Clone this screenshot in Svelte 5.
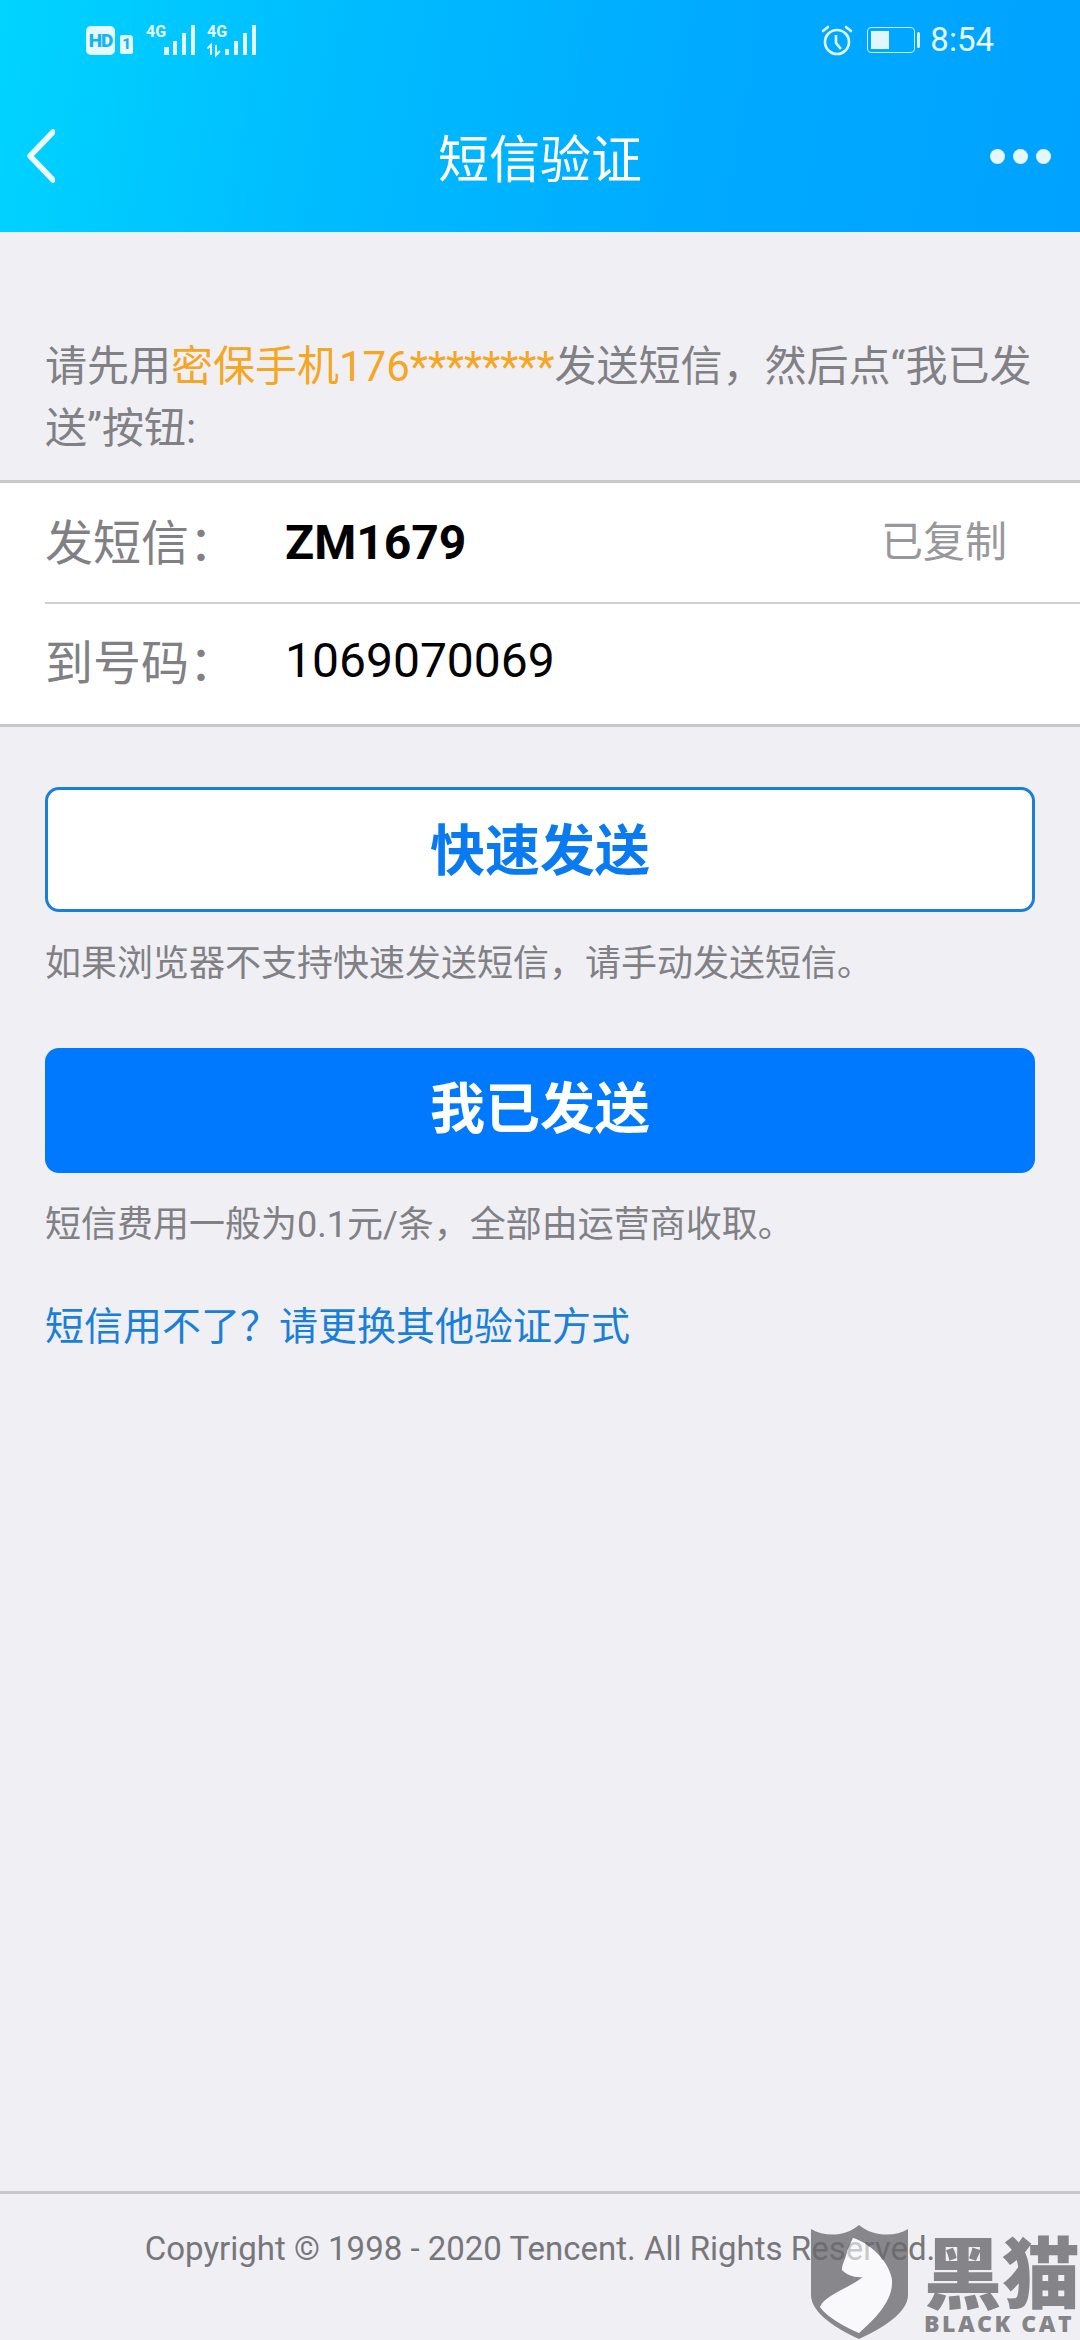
<script>
  const rows = [
    { label: '发短信：', value: 'ZM1679', strong: true, action: '已复制' },
    { label: '到号码：', value: '1069070069' }
  ]
</script>

<div class="page">
  <header class="top">
    <div class="status">
      <div class="status-left">
        <span class="hd">HD</span>
        <span class="sim">1</span>
        <svg class="signal" width="50" height="32" viewBox="0 0 50 32">
          <text x="0" y="13" class="net">4G</text>
          <g fill="#e6f9ff">
            <rect x="18" y="23" width="5" height="8" />
            <rect x="27" y="17" width="4" height="14" />
            <rect x="36" y="9" width="4" height="22" />
            <rect x="45" y="1" width="4" height="30" />
          </g>
        </svg>
        <svg class="signal second" width="50" height="32" viewBox="0 0 50 32">
          <text x="0" y="13" class="net">4G</text>
          <g fill="#e6f9ff">
            <path d="M4 31v-10l-3.500 3.500M9 21v10l4-4" fill="none" stroke="#e6f9ff" stroke-width="2" />
            <rect x="18" y="25" width="4" height="6" />
            <rect x="27" y="17" width="4" height="14" />
            <rect x="36" y="9" width="4" height="22" />
            <rect x="45" y="1" width="4" height="30" />
          </g>
        </svg>
      </div>
      <div class="status-right">
        <svg class="alarm" width="32" height="32" viewBox="0 0 32 32" fill="none" stroke="#e6f9ff" stroke-width="2.6">
          <circle cx="16" cy="18" r="12" />
          <path d="M15 11v8l5 6" />
          <path d="M2 7l5-4M30 7l-5-4" stroke-linecap="round" />
        </svg>
        <div class="battery"><span class="level"></span></div>
        <span class="tip"></span>
        <span class="time">8:54</span>
      </div>
    </div>
    <div class="nav">
      <svg class="back" width="28" height="54" viewBox="0 0 28 54" fill="none" stroke="#eefbff" stroke-width="5.5" stroke-linecap="round" stroke-linejoin="round">
        <path d="M26 3L3 27l23 24" />
      </svg>
      <h1>短信验证</h1>
      <div class="dots"><i></i><i></i><i></i></div>
    </div>
  </header>

  <main>
    <p class="intro">请先用<em>密保手机176********</em>发送短信，然后点“我已发送”按钮:</p>

    <section class="card">
      {#each rows as row}
        <div class="row">
          <span class="label">{row.label}</span>
          <span class="value" class:strong={row.strong}>{row.value}</span>
          {#if row.action}<span class="action">{row.action}</span>{/if}
        </div>
      {/each}
    </section>

    <div class="actions">
      <button class="btn outline">快速发送</button>
      <p class="hint">如果浏览器不支持快速发送短信，请手动发送短信。</p>
      <button class="btn solid">我已发送</button>
      <p class="hint">短信费用一般为0.1元/条，全部由运营商收取。</p>
      <p class="link">短信用不了？请更换其他验证方式</p>
    </div>
  </main>

  <footer>Copyright © 1998 - 2020 Tencent. All Rights Reserved.</footer>

  <div class="watermark">
    <svg width="98" height="115" viewBox="0 0 98 115">
      <path fill-rule="evenodd" fill="#6a6a6e" fill-opacity="0.78" d="M0 4C14 12 34 12 48 0C62 12 84 12 97 4V70C97 88 70 104 48 114C26 104 0 88 0 70ZM42 13C58 18 78 35 81 55C82 75 66 92 48 108C34 102 16 92 9 82C14 70 35 65 52 52C44 53 36 50 31 45C31 38 36 32 36 26Z" />
      <path fill="#fff" fill-opacity="0.6" d="M42 13C58 18 78 35 81 55C82 75 66 92 48 108C34 102 16 92 9 82C14 70 35 65 52 52C44 53 36 50 31 45C31 38 36 32 36 26Z" />
    </svg>
    <div class="brand">
      <span class="cn">黑猫</span>
      <span class="en">BLACK CAT</span>
    </div>
  </div>
</div>

<style>
  :global(body) {
    margin: 0;
  }

  .page {
    position: relative;
    width: 1080px;
    height: 2340px;
    overflow: hidden;
    display: flex;
    flex-direction: column;
    background: #efeff4;
    font-family: Roboto, "Noto Sans CJK SC", sans-serif;
  }

  .top {
    height: 232px;
    background: linear-gradient(100deg, #00d4ff 0%, #00bdff 30%, #00aaff 65%, #00a2ff 100%);
  }

  .status {
    height: 80px;
    display: flex;
    justify-content: space-between;
    align-items: center;
    padding: 0 86px 0 86px;
    color: #e6f9ff;
  }

  .status-left,
  .status-right {
    display: flex;
    align-items: center;
  }

  .hd {
    width: 29px;
    height: 29px;
    border-radius: 5px;
    background: #e6f9ff;
    color: #12b5f0;
    font-size: 19px;
    font-weight: 900;
    line-height: 29px;
    text-align: center;
    letter-spacing: -1px;
  }

  .sim {
    width: 13px;
    height: 19px;
    margin: 9px 0 0 5px;
    border-radius: 2px 4px 2px 2px;
    background: #e6f9ff;
    color: #12b5f0;
    font-size: 15px;
    font-weight: 900;
    line-height: 19px;
    text-align: center;
  }

  .signal {
    margin-left: 13px;
    overflow: visible;
  }

  .signal.second {
    margin-left: 11px;
  }

  .net {
    font-family: Roboto, sans-serif;
    font-size: 16px;
    font-weight: 700;
    fill: #e6f9ff;
  }

  .battery {
    width: 48px;
    height: 26px;
    margin-left: 14px;
    box-sizing: border-box;
    padding: 3px;
    border: 1.5px solid #c4efff;
    border-radius: 4px;
  }

  .level {
    display: block;
    width: 18px;
    height: 100%;
    background: #e2f6ff;
  }

  .tip {
    width: 3px;
    height: 16px;
    margin-left: 2px;
    border-radius: 2px;
    background: #d5f3ff;
  }

  .time {
    margin-left: 10px;
    font-size: 33px;
    line-height: 40px;
  }

  .nav {
    position: relative;
    height: 152px;
    display: flex;
    align-items: center;
    justify-content: space-between;
    padding: 0 29px 0 27px;
  }

  .nav h1 {
    margin: 0;
    position: absolute;
    left: 0;
    right: 0;
    text-align: center;
    color: #fff;
    font-size: 51px;
    font-weight: 400;
  }

  .dots {
    display: flex;
    gap: 8px;
  }

  .dots i {
    width: 15px;
    height: 15px;
    border-radius: 50%;
    background: #e6f6ff;
  }

  main {
    flex: 1;
  }

  .intro {
    margin: 104px 30px 0 45px;
    color: #808085;
    font-size: 42px;
    line-height: 62px;
  }

  .intro em {
    font-style: normal;
    color: #f5a623;
  }

  .card {
    margin-top: 20px;
    background: #fff;
    border-top: 3px solid #c8c8cc;
    border-bottom: 3px solid #c8c8cc;
  }

  .row {
    height: 119px;
    box-sizing: border-box;
    display: flex;
    align-items: center;
    margin-left: 45px;
    padding: 0 73px 8px 0;
    font-size: 48px;
  }

  .row + .row {
    height: 122px;
    padding-bottom: 11px;
    border-top: 2px solid #d0d0d4;
  }

  .label {
    width: 240px;
    flex: none;
    color: #808085;
  }

  .value {
    flex: 1;
    padding-top: 3px;
    color: #000;
  }

  .value.strong {
    padding-top: 7px;
    font-weight: 700;
  }

  .action {
    color: #98989c;
    font-size: 42px;
  }

  .actions {
    padding: 60px 45px 0;
  }

  .btn {
    display: block;
    width: 100%;
    height: 125px;
    box-sizing: border-box;
    padding: 0 0 8px;
    border-radius: 14px;
    font-family: inherit;
    font-size: 55px;
    font-weight: 700;
  }

  .outline {
    border: 3px solid #1a7fdb;
    background: #fff;
    color: #0a7af0;
  }

  .solid {
    margin-top: 60px;
    padding-bottom: 14px;
    border: none;
    background: #0079ff;
    color: #fff;
  }

  .hint {
    margin: 28px 0 0;
    color: #808085;
    font-size: 36px;
    line-height: 48px;
  }

  .link {
    margin: 50px 0 0;
    color: #1a7fd6;
    font-size: 39px;
    line-height: 56px;
  }

  footer {
    height: 149px;
    box-sizing: border-box;
    padding-top: 33px;
    border-top: 3px solid #c8c8cc;
    text-align: center;
    color: #77777b;
    font-size: 33px;
    line-height: 44px;
  }

  .watermark {
    position: absolute;
    left: 811px;
    top: 2225px;
    display: flex;
    gap: 15px;
  }

  .brand {
    display: flex;
    flex-direction: column;
    color: #858589;
    margin-top: 2px;
  }

  .cn {
    font-family: "Noto Sans CJK SC", sans-serif;
    font-size: 78px;
    font-weight: 900;
    line-height: 84px;
    white-space: nowrap;
  }

  .en {
    font-family: "Open Sans", sans-serif;
    font-size: 23px;
    font-weight: 800;
    line-height: 24px;
    letter-spacing: 2.500px;
    white-space: nowrap;
  }
</style>
